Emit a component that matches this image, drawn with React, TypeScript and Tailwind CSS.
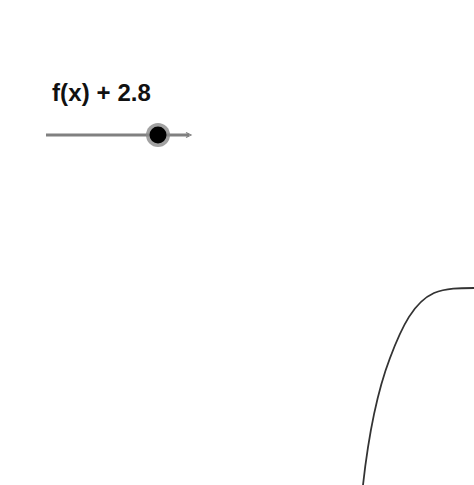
export default function App() {
  return (
    <div className="relative w-[474px] h-[485px] overflow-hidden bg-white">
      {/* Graph */}
      <svg className="absolute inset-0" width="474" height="485" viewBox="0 0 474 485">
        <path
          d="M363 485 C368 440, 377 392, 390 358 C402 326, 414 302, 434 293 C446 288, 460 288, 474 288"
          fill="none"
          stroke="#333"
          strokeWidth="1.8"
        />
        {/* Slider */}
        <line x1="46" y1="135" x2="189" y2="135" stroke="#808080" strokeWidth="3" />
        <path d="M186 132.5 L191 135 L186 137.5" fill="none" stroke="#808080" strokeWidth="1.2" />
        <circle cx="158" cy="135" r="12" fill="#8a8a8a" fillOpacity="0.8" />
        <circle cx="158" cy="135" r="8.5" fill="#000" />
      </svg>

      {/* Label */}
      <div
        className="absolute left-[52px] top-[81px] text-[24px] font-bold leading-none text-[#111] tracking-[0.1px]"
        style={{ fontFamily: '"Liberation Sans", Arial, sans-serif' }}
      >
        f(x) + 2.8
      </div>
    </div>
  );
}
